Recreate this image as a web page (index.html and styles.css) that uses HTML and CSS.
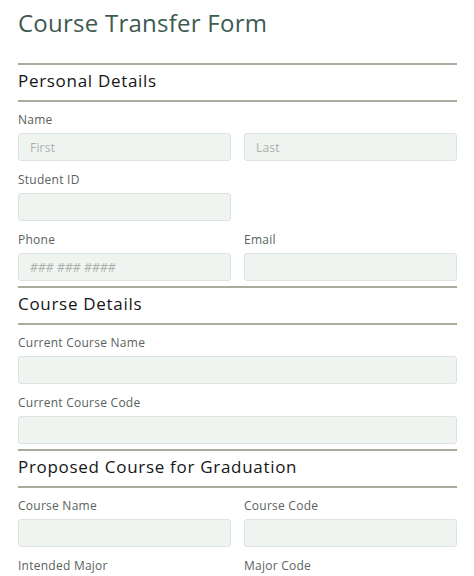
FILE: index.html
```html
<!DOCTYPE html>
<html lang="en">
<head>
  <meta charset="UTF-8">
  <title>Course Transfer Form</title>
  <link rel="stylesheet" href="styles.css">
</head>
<body>
  <form class="transfer-form">
    <h1 class="form-title">Course Transfer Form</h1>

    <h2 class="section-title">Personal Details</h2>
    <div class="fields">
      <div class="field wide">
        <label>Name</label>
        <div class="pair">
          <input type="text" placeholder="First">
          <input type="text" placeholder="Last">
        </div>
      </div>
      <div class="field">
        <label>Student ID</label>
        <input type="text">
      </div>
      <div class="field"></div>
      <div class="field">
        <label>Phone</label>
        <input type="tel" class="phone" placeholder="### ### ####">
      </div>
      <div class="field">
        <label>Email</label>
        <input type="email">
      </div>
    </div>

    <h2 class="section-title">Course Details</h2>
    <div class="fields">
      <div class="field wide">
        <label>Current Course Name</label>
        <input type="text">
      </div>
      <div class="field wide">
        <label>Current Course Code</label>
        <input type="text">
      </div>
    </div>

    <h2 class="section-title">Proposed Course for Graduation</h2>
    <div class="fields">
      <div class="field">
        <label>Course Name</label>
        <input type="text">
      </div>
      <div class="field">
        <label>Course Code</label>
        <input type="text">
      </div>
      <div class="field">
        <label>Intended Major</label>
        <input type="text">
      </div>
      <div class="field">
        <label>Major Code</label>
        <input type="text">
      </div>
    </div>
  </form>
</body>
</html>
```

FILE: styles.css
```css
* {
  box-sizing: border-box;
  margin: 0;
  padding: 0;
}

body {
  background: #fff;
  font-family: "Open Sans", sans-serif;
}

.transfer-form {
  padding: 8px 17px 40px 18px;
}

.form-title {
  font-size: 24px;
  line-height: 30px;
  font-weight: 400;
  letter-spacing: 0.25px;
  color: #3e5a50;
}

.section-title {
  margin-top: 5px;
  border-top: 2px solid #a7ac9d;
  border-bottom: 2px solid #a7ac9d;
  padding-bottom: 4px;
  font-size: 17px;
  line-height: 31px;
  font-weight: 500;
  letter-spacing: 0.7px;
  color: #161616;
}

.form-title + .section-title {
  margin-top: 25px;
}

.fields {
  display: grid;
  grid-template-columns: 1fr 1fr;
  column-gap: 13px;
  row-gap: 11px;
  padding-top: 10px;
}

.field.wide {
  grid-column: 1 / 3;
}

.pair {
  display: grid;
  grid-template-columns: 1fr 1fr;
  column-gap: 13px;
}

.field label {
  display: block;
  margin-bottom: 5px;
  font-size: 12px;
  line-height: 16px;
  letter-spacing: 0.25px;
  color: #59625d;
}

.field input {
  display: block;
  width: 100%;
  height: 28px;
  padding: 0 11px;
  background: #f0f4f1;
  border: 1px solid #dde4df;
  border-radius: 3px;
  font-family: inherit;
  font-size: 12px;
  letter-spacing: 0.2px;
  color: #333;
}

.field input::placeholder {
  color: #a9b1ac;
}

.field input.phone::placeholder {
  font-style: italic;
}
```
